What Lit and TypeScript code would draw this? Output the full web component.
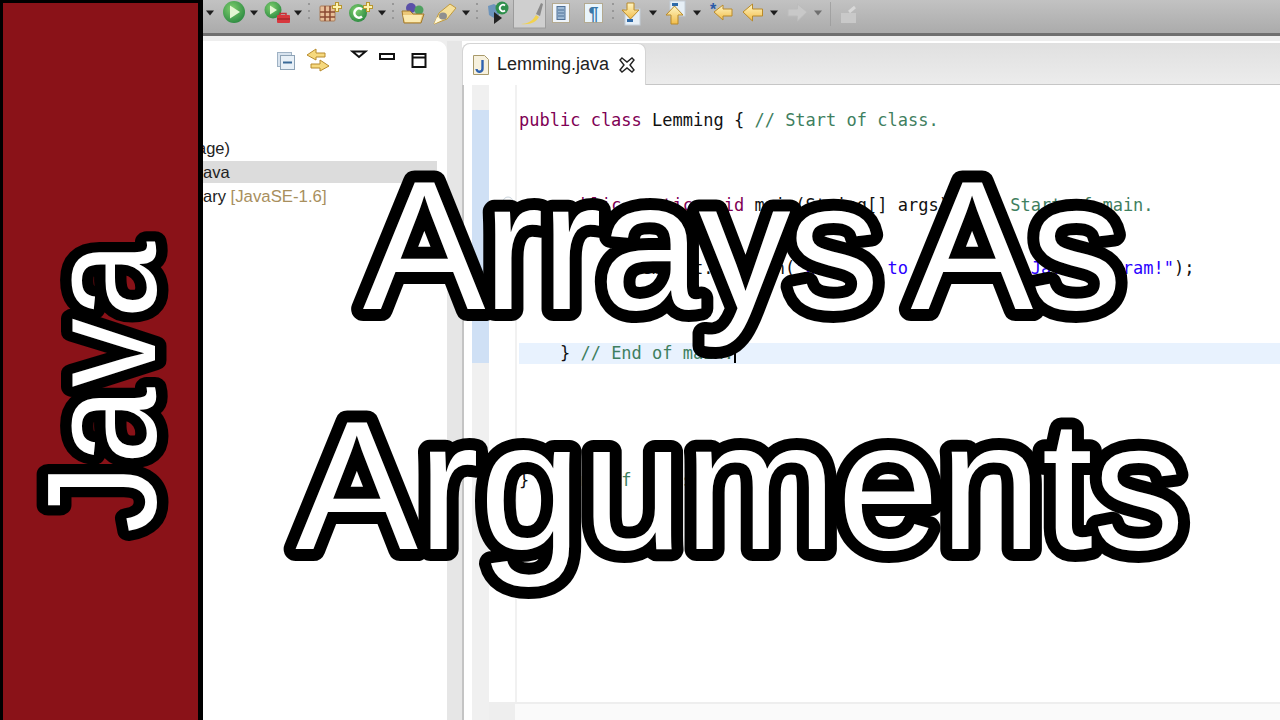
import { LitElement, html, css, svg } from "lit";
import { customElement } from "lit/decorators.js";

const drop = (x: number, color = "#1c1c1c") => svg`<path d="M${x} 10.500h8l-4 5z" fill="${color}"/>`;
const dots = (x: number) => svg`<path d="M${x} 3v21" stroke="#8f8f8f" stroke-width="2" stroke-dasharray="2 5" opacity=".8"/>`;
const plus = (x: number, y: number) => svg`<path d="M${x} ${y - 5}v10M${x - 5} ${y}h10" stroke="#b8962e" stroke-width="4"/><path d="M${x} ${y - 4}v8M${x - 4} ${y}h8" stroke="#fdf3b0" stroke-width="2"/>`;

@customElement("app-root")
export class AppRoot extends LitElement {
  static styles = css`
    :host { display: block; width: 1280px; height: 720px; overflow: hidden; position: relative; background: #fff; font-family: "Liberation Sans", Arial, sans-serif; }
    .page { display: flex; width: 1280px; height: 720px; }
    .java { width: 203px; flex: none; box-sizing: border-box; background: #8a1218; border: solid #000; border-width: 3px 5px 0 3px; position: relative; z-index: 1; }
    .java svg { display: block; overflow: visible; }
    .outlined { font-family: "Liberation Sans", Arial, sans-serif; fill: #fff; stroke: #000; stroke-linejoin: round; stroke-linecap: round; paint-order: stroke fill; }
    .main { flex: 1; min-width: 0; display: flex; flex-direction: column; }
    .toolbar { height: 33px; flex: none; background: linear-gradient(#c2c2c2, #ababab); border-bottom: 3px solid #6f6f6f; }
    .toolbar svg { display: block; }
    .work { flex: 1; min-height: 0; display: flex; background: #eeeeee; padding-top: 5px; }
    .left { width: 244px; flex: none; background: #fff; border-top-right-radius: 10px; display: flex; flex-direction: column; overflow: hidden; }
    .view-icons { height: 58px; flex: none; }
    .view-icons svg { display: block; }
    .tree { padding-top: 38px; font-size: 16.500px; color: #222; }
    .row { height: 22px; line-height: 22px; white-space: pre; margin-right: 10px; margin-bottom: 2px; overflow: hidden; }
    .row.sel { background: #dcdcdc; }
    .crop { margin-left: -6px; display: inline-block; }
    .deco { color: #a88f5e; font-size: 16.800px; }
    .sash { width: 15px; flex: none; background: #e6e6e6; }
    .editor { flex: 1; min-width: 0; display: flex; flex-direction: column; background: #fff; }
    .tabs { height: 42px; flex: none; box-sizing: border-box; margin-top: 2px; display: flex; background: linear-gradient(#e0e0e0, #ececec); border-bottom: 1px solid #c6c6c6; border-top-left-radius: 8px; }
    .tab { width: 184px; height: 42px; flex: none; box-sizing: border-box; background: #fff; border: 1px solid #d4d4d4; border-bottom: 0; border-radius: 8px 8px 0 0; display: flex; align-items: center; gap: 7px; padding-left: 9px; font-size: 18px; color: #222; }
    .tab svg { flex: none; }
    .tab span { margin-right: 3px; }
    .body { flex: 1; min-height: 0; display: flex; border-left: 2px solid #c4c4c4; }
    .pad { width: 8px; flex: none; background: #fff; }
    .ruler { width: 17px; flex: none; background: #f0f0f0; padding-top: 25px; }
    .bluemark { height: 253px; background: #cfe0f5; }
    .main-ed { flex: 1; min-width: 0; display: flex; flex-direction: column; }
    .code-area { flex: 1; min-height: 0; display: flex; }
    .annot { width: 26px; flex: none; background: #fff; position: relative; }
    .fold { position: absolute; left: 13px; top: 111px; }
    .ln { width: 2px; flex: none; background: #f1f1f1; }
    .code { flex: 1; min-width: 0; padding-top: 25px; padding-left: 2px; font: 17px/21.200px "DejaVu Sans Mono", monospace; color: #111; overflow: hidden; }
    .line { height: 21.200px; white-space: pre; }
    .line.cur { background: #e8f2fe; }
    .kw { color: #7f0055; }
    .cm { color: #3f7f5f; }
    .st { color: #2a00ff; }
    .caret { display: inline-block; width: 2px; height: 20px; background: #000; vertical-align: -4px; }
    .hscroll { height: 18px; flex: none; display: flex; background: #fafafa; border-top: 2px solid #eee; box-sizing: border-box; }
    .corner { width: 26px; background: #eee; }
    .title { position: absolute; left: 0; top: 0; z-index: 2; display: block; }
  `;

  private toolbar() {
    return html`<svg width="1077" height="33" viewBox="203 0 1077 33">
      <defs>
        <radialGradient id="g" cx=".4" cy=".35" r=".8"><stop offset="0" stop-color="#7fcf6e"/><stop offset="1" stop-color="#1f7f3a"/></radialGradient>
        <linearGradient id="y" x1="0" y1="0" x2="0" y2="1"><stop offset="0" stop-color="#fff6c4"/><stop offset="1" stop-color="#f2bd4a"/></linearGradient>
      </defs>
      ${drop(206)}
      <circle cx="234" cy="12" r="11" fill="url(#g)"/><path d="M230 5.500l10 6.500-10 6.500z" fill="#e4f5d2"/>
      ${drop(250)}
      <circle cx="273" cy="10" r="8.500" fill="url(#g)"/><path d="M270 5.500l7 4.500-7 4.500z" fill="#e4f5d2"/>
      <path d="M280 15.500v-2h6v2" fill="none" stroke="#c62f35" stroke-width="1.500"/><rect x="277" y="15" width="13" height="8" rx="1" fill="#d8383e"/><path d="M277 19h13" stroke="#8d1c20"/>
      ${drop(294)}
      ${dots(309)}
      <rect x="320" y="6" width="15" height="15" rx="1" fill="#e8bf98" stroke="#a87d5a"/><path d="M320 12h15M320 17h15M325 6v15M330 6v15" stroke="#8a4a32" stroke-width="1.500"/>
      ${plus(337, 7)}
      <circle cx="358" cy="13" r="9" fill="url(#g)"/><path d="M362 9.500a4.600 4.600 0 1 0 0 7" stroke="#fff" stroke-width="2.600" fill="none"/>
      ${plus(368, 7)}
      ${drop(378)}
      ${dots(393)}
      <circle cx="411" cy="8" r="5" fill="#5a50a8"/><circle cx="419" cy="10" r="4.500" fill="#4fa060"/>
      <path d="M402 11h8l3 3h11l-3 9h-17z" fill="#ecc878" stroke="#a27a2c"/><path d="M403 15h19l-2 7h-15z" fill="#fbeab0"/>
      <path d="M434 24l5-11 11-9 6 4-9 11z" fill="#f6e09a" stroke="#c09a3e"/>
      <path d="M434 24l3-7 5 3z" fill="#fff8d8"/><ellipse cx="443" cy="16" rx="4" ry="3.500" fill="#8f8f8f"/>
      ${drop(462)}
      ${dots(477)}
      <path d="M488 6l6-2 5 3v8l-5 3-5-3z" fill="#6d94bb"/><circle cx="502" cy="8" r="6.500" fill="#2f8f4c"/><path d="M505 5.500a3.200 3.200 0 1 0 0 5" stroke="#fff" stroke-width="1.800" fill="none"/>
      <path d="M494 12v12l8-6z" fill="#222"/>
      <rect x="513.500" y="-1" width="32" height="29" fill="#cfcfcf" stroke="#9c9c9c"/>
      <path d="M521 24c6 0 12-3 15-9l3 2c-3 5-8 8-18 7z" fill="#f2d24e"/><path d="M536 14l5-11 2 1-3 12z" fill="#8a8a8a"/>
      <rect x="552.500" y="3.500" width="17" height="19" fill="#eef4fa" stroke="#b4aa90"/><rect x="557" y="6.500" width="8" height="13" fill="#9db9d4" stroke="#4f7096"/><path d="M558 10h6M558 13h6M558 16h6" stroke="#4f7096"/>
      <rect x="584.500" y="3.500" width="18" height="19" fill="#e9f5fc" stroke="#b4aa90"/><text x="593.500" y="20" font-size="18" font-weight="bold" fill="#3a78a8" text-anchor="middle" font-family="Liberation Sans">¶</text>
      ${dots(613)}
      <rect x="625" y="9" width="15" height="16" fill="#e6eff6" stroke="#c4ced8"/><rect x="627" y="19" width="6" height="3" fill="#2f6aa8"/>
      <path d="M627 3h7v7h5l-8.500 9-8.500-9h5z" fill="url(#y)" stroke="#b98a2a"/>
      ${drop(649)}
      <rect x="670" y="1" width="15" height="15" fill="#e6eff6" stroke="#c4ced8"/><rect x="672" y="3" width="6" height="3" fill="#2f6aa8"/>
      <path d="M671 24v-9h-5l8.500-9 8.500 9h-5v9z" fill="url(#y)" stroke="#b98a2a"/>
      ${drop(693)}
      <path d="M714 12l9-7v4h9v7h-9v4z" fill="url(#y)" stroke="#b98a2a"/>
      <text x="713" y="15" font-size="16" font-weight="bold" fill="#2a5aa8" text-anchor="middle" font-family="Liberation Sans">*</text>
      <path d="M743 12l9.500-8v5h10v7h-10v5z" fill="url(#y)" stroke="#b98a2a"/>
      ${drop(770)}
      <path d="M807 12l-9.500-8v5h-9.500v7h9.500v5z" fill="#c8c8c8" stroke="#bcbcbc"/>
      ${drop(814, "#6f6f6f")}
      <path d="M830.500 2v24" stroke="#999" opacity=".7"/>
      <path d="M841 13h15v10h-15z" fill="#c9c9c9"/><path d="M849 12l6-5" stroke="#d8d8d8" stroke-width="3"/>
    </svg>`;
  }

  private viewIcons() {
    return html`<svg width="244" height="58" viewBox="203 41 244 58">
      <rect x="277.500" y="52.500" width="14" height="14" fill="#d8e3ee" stroke="#9fb2c4"/>
      <rect x="280.500" y="55.500" width="14" height="14" fill="#e8f0f7" stroke="#8ea3b6"/>
      <path d="M283 62.500h9" stroke="#3a6a98" stroke-width="2"/>
      <path d="M316 49l-9 6 9 5v-3h9v-4h-9z" fill="#f6d97e" stroke="#b78a2c"/>
      <path d="M320 60l9 6-9 5v-3h-9v-4h9z" fill="#f6d97e" stroke="#b78a2c"/>
      <path d="M352.500 51.500h13l-6.500 5.500z" fill="#fff" stroke="#111" stroke-width="2"/>
      <rect x="380" y="54" width="14" height="5" fill="#fff" stroke="#111" stroke-width="2"/>
      <rect x="412.500" y="54" width="13" height="13" fill="#fff" stroke="#111" stroke-width="2"/>
      <path d="M412 57.500h14" stroke="#111" stroke-width="2"/>
    </svg>`;
  }

  render() {
    return html`
      <div class="page">
        <div class="java">
          <svg width="195" height="717" viewBox="3 3 195 717">
            <text class="outlined" transform="translate(155 533) rotate(-90) scale(.885 1)" font-size="156" stroke-width="23">Java</text>
          </svg>
        </div>
        <div class="main">
          <div class="toolbar">${this.toolbar()}</div>
          <div class="work">
            <div class="left">
              <div class="view-icons">${this.viewIcons()}</div>
              <div class="tree">
                <div class="row"><span class="crop">age)</span></div>
                <div class="row sel">ava</div>
                <div class="row">ary <span class="deco">[JavaSE-1.6]</span></div>
              </div>
            </div>
            <div class="sash"></div>
            <div class="editor">
              <div class="tabs">
                <div class="tab">
                  <svg width="18" height="22" viewBox="0 0 18 22"><path d="M1.500 1.500h11l4 4v15h-15z" fill="#f7f1de" stroke="#a99a6a"/><path d="M10.500 6v8.500a3 3 0 0 1-6 .5" fill="none" stroke="#2f62b0" stroke-width="2.400"/></svg>
                  <span>Lemming.java</span>
                  <svg width="16" height="16" viewBox="0 0 16 16"><path d="M3 1l5 4 5-4 2 2-4 5 4 5-2 2-5-4-5 4-2-2 4-5-4-5z" fill="#fff" stroke="#222" stroke-width="1.400"/></svg>
                </div>
              </div>
              <div class="body">
                <div class="pad"></div>
                <div class="ruler"><div class="bluemark"></div></div>
                <div class="main-ed">
                  <div class="code-area">
                    <div class="annot">
                      <svg class="fold" width="12" height="12" viewBox="0 0 12 12"><circle cx="6" cy="6" r="5" fill="#fff" stroke="#c9d3dc"/><path d="M3.500 6h5" stroke="#c9d3dc"/></svg>
                    </div>
                    <div class="ln"></div>
                    <div class="code">${this.code()}</div>
                  </div>
                  <div class="hscroll"><div class="corner"></div></div>
                </div>
              </div>
            </div>
          </div>
        </div>
      </div>
      <svg class="title" width="1280" height="720" viewBox="0 0 1280 720">
        <text class="outlined" x="741" y="309" text-anchor="middle" font-size="184" stroke-width="24" letter-spacing="-3" word-spacing="-4">Arrays As</text>
        <text class="outlined" x="740" y="549" text-anchor="middle" font-size="184" stroke-width="24">Arguments</text>
      </svg>
    `;
  }

  private code() {
    const blank = html`<div class="line"> </div>`;
    return html`
      <div class="line"><span class="kw">public class</span> Lemming { <span class="cm">// Start of class.</span></div>
      ${blank}${blank}${blank}
      <div class="line">    <span class="kw">public static void</span> main(String[] args) { <span class="cm">// Start of main.</span></div>
      ${blank}${blank}
      <div class="line">        System.out.println(<span class="st">"Welcome to your first Java program!"</span>);</div>
      ${blank}${blank}${blank}
      <div class="line cur">    } <span class="cm">// End of main.</span><span class="caret"></span></div>
      ${blank}${blank}${blank}${blank}${blank}
      <div class="line">} <span class="cm">// End of class.</span></div>
    `;
  }
}
